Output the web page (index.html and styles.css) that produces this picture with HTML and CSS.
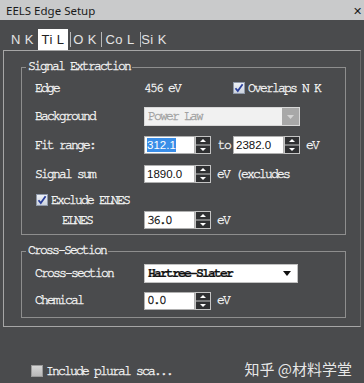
FILE: index.html
```html
<!DOCTYPE html>
<html>
<head>
<meta charset="utf-8">
<link rel="stylesheet" href="styles.css">
</head>
<body>
<div class="titlebar"><span>EELS Edge Setup</span><span class="close">✕</span></div>
<div class="tabs">
  <span class="tab t1">N K</span>
  <span class="tab t2 active">Ti L</span>
  <span class="sep"></span>
  <span class="tab t3">O K</span>
  <span class="sep"></span>
  <span class="tab t4">Co L</span>
  <span class="sep"></span>
  <span class="tab t5">Si K</span>
</div>
<div class="panel">
  <fieldset class="group g1">
    <legend>Signal Extraction</legend>
    <div class="row r-edge">
      <span class="label">Edge</span>
      <span class="edgeval">456 eV</span>
      <span class="cb checked"><svg width="10" height="10" viewBox="0 0 10 10"><path d="M1.5 5.2 L3.8 8 L8.6 1.2" fill="none" stroke="#2a3f9a" stroke-width="1.8"/></svg></span>
      <span class="cbtext">Overlaps N K</span>
    </div>
    <div class="row r-bg">
      <span class="label">Background</span>
      <span class="select disabled"><span class="seltext">Power Law</span><span class="selbtn"><svg width="7" height="4" viewBox="0 0 7 4"><path d="M0 0h7L3.5 4z" fill="#d4d4d4"/></svg></span></span>
    </div>
    <div class="row r-fit">
      <span class="label">Fit range:</span>
      <span class="num sans"><span class="hl">312.1</span></span>
      <span class="spin"><svg width="16" height="18" viewBox="0 0 16 18"><rect width="16" height="18" fill="#c4c4c4"/><rect x="1" y="1" width="14" height="7.5" fill="#2f3032"/><rect x="1" y="9.5" width="14" height="7.5" fill="#2f3032"/><path d="M5 6h6L8 3z" fill="#fff"/><path d="M5 12h6l-3 3z" fill="#fff"/></svg></span>
      <span class="to">to</span>
      <span class="num sans">2382.0</span>
      <span class="spin"><svg width="16" height="18" viewBox="0 0 16 18"><rect width="16" height="18" fill="#c4c4c4"/><rect x="1" y="1" width="14" height="7.5" fill="#2f3032"/><rect x="1" y="9.5" width="14" height="7.5" fill="#2f3032"/><path d="M5 6h6L8 3z" fill="#fff"/><path d="M5 12h6l-3 3z" fill="#fff"/></svg></span>
      <span class="unit u-fit">eV</span>
    </div>
    <div class="row r-sum">
      <span class="label">Signal sum</span>
      <span class="num sans">1890.0</span>
      <span class="spin"><svg width="16" height="18" viewBox="0 0 16 18"><rect width="16" height="18" fill="#c4c4c4"/><rect x="1" y="1" width="14" height="7.5" fill="#2f3032"/><rect x="1" y="9.5" width="14" height="7.5" fill="#2f3032"/><path d="M5 6h6L8 3z" fill="#fff"/><path d="M5 12h6l-3 3z" fill="#fff"/></svg></span>
      <span class="unit">eV (excludes</span>
    </div>
    <div class="row r-excl">
      <span class="cb checked"><svg width="10" height="10" viewBox="0 0 10 10"><path d="M1.5 5.2 L3.8 8 L8.6 1.2" fill="none" stroke="#2a3f9a" stroke-width="1.8"/></svg></span>
      <span class="cbtext">Exclude ELNES</span>
    </div>
    <div class="row r-elnes">
      <span class="label sub">ELNES</span>
      <span class="num">36.0</span>
      <span class="spin"><svg width="16" height="18" viewBox="0 0 16 18"><rect width="16" height="18" fill="#c4c4c4"/><rect x="1" y="1" width="14" height="7.5" fill="#2f3032"/><rect x="1" y="9.5" width="14" height="7.5" fill="#2f3032"/><path d="M5 6h6L8 3z" fill="#fff"/><path d="M5 12h6l-3 3z" fill="#fff"/></svg></span>
      <span class="unit">eV</span>
    </div>
  </fieldset>
  <fieldset class="group g2">
    <legend>Cross-Section</legend>
    <div class="row r-cs">
      <span class="label">Cross-section</span>
      <span class="select"><span class="seltext bold">Hartree-Slater</span><span class="arrow"><svg width="8" height="5" viewBox="0 0 8 5"><path d="M0 0h8L4 5z" fill="#111"/></svg></span></span>
    </div>
    <div class="row r-chem">
      <span class="label">Chemical</span>
      <span class="num">0.0</span>
      <span class="spin"><svg width="16" height="18" viewBox="0 0 16 18"><rect width="16" height="18" fill="#c4c4c4"/><rect x="1" y="1" width="14" height="7.5" fill="#2f3032"/><rect x="1" y="9.5" width="14" height="7.5" fill="#2f3032"/><path d="M5 6h6L8 3z" fill="#fff"/><path d="M5 12h6l-3 3z" fill="#fff"/></svg></span>
      <span class="unit">eV</span>
    </div>
  </fieldset>
</div>
<div class="row r-plural">
  <span class="cb"></span>
  <span class="cbtext">Include plural sca...</span>
</div>
<div class="watermark">知乎 @材料学堂</div>
</body>
</html>
```
FILE: styles.css
```css
* { box-sizing: border-box; }
html, body { margin: 0; }
body {
  width: 364px;
  height: 383px;
  background: #4a4b4d;
  color: #f2f2f2;
  font-family: "FreeMono", "Liberation Mono", monospace;
  font-size: 13px;
  letter-spacing: -1.8px;
  -webkit-text-stroke: 0.35px currentColor;
  overflow: hidden;
  position: relative;
}
.titlebar {
  height: 20px;
  background: #c9cacb;
  color: #1a1a1a;
  font-family: "Noto Sans", sans-serif;
  font-size: 11.5px;
  letter-spacing: 0;
  -webkit-text-stroke: 0;
  display: flex;
  align-items: center;
  justify-content: space-between;
  padding: 0 2px 0 6px;
  overflow: hidden;
}
.close { font-size: 11px; }
.tabs {
  display: flex;
  align-items: center;
  height: 21px;
  margin-top: 9px;
  padding-left: 7px;
  font-family: "Liberation Sans", sans-serif;
  font-size: 13px;
  letter-spacing: 0.4px;
  -webkit-text-stroke: 0;
}
.tab {
  height: 21px;
  display: flex;
  align-items: center;
  justify-content: center;
  color: #e4e4e4;
}
.t1 { width: 31px; }
.t2 { width: 30px; }
.t3 { width: 28px; }
.t4 { width: 36px; }
.t5 { width: 26px; }
.tab.active { background: #ffffff; color: #222; }
.sep { width: 1px; height: 15px; background: #b8b8b8; margin-left: 2px; }
.panel {
  margin-left: 3px;
  width: 358px;
  border: 1px solid #a6a6a6;
  border-right-color: #6a6a6a;
  padding: 0 0 8px 17px;
}
fieldset.group {
  margin: 9px 0 0;
  padding: 0 0 5px 0;
  width: 325px;
  min-width: 0;
  border: 1px solid #8e8e8e;
}
.g2 { margin-top: 10px; padding-bottom: 4px; }
legend {
  padding: 0 2px;
  margin-left: 4px;
  line-height: 14px;
  height: 14px;
}
.row { display: flex; align-items: center; }
.group .row { margin-left: 13px; }
.label { width: 109px; flex: none; }
.label.sub { padding-left: 27px; }
.r-edge { height: 28px; }
.r-bg { height: 29px; }
.r-fit { height: 28px; }
.r-sum { height: 30px; }
.r-excl { height: 22px; padding-left: 1px; }
.r-elnes { height: 18px; }
.r-cs { height: 31px; }
.r-chem { height: 23px; }
.edgeval { width: 89px; }
.cb {
  width: 12px;
  height: 12px;
  flex: none;
  border: 1px solid #8f99aa;
  background: linear-gradient(#eef1f6, #ccd3de);
  display: flex;
  align-items: center;
  justify-content: center;
}
.cbtext { margin-left: 3px; }
.num {
  width: 51px;
  height: 18px;
  flex: none;
  background: #fff;
  border: 1px solid #b0b0b0;
  color: #111;
  padding-left: 2px;
  display: flex;
  align-items: center;
}
.num.sans {
  font-family: "Liberation Sans", sans-serif;
  font-size: 11.5px;
  letter-spacing: 0;
  -webkit-text-stroke: 0;
}
.hl { background: #3a8ee8; color: #fff; padding: 1px 0; }
.spin { width: 16px; height: 18px; flex: none; display: block; }
.spin svg { display: block; }
.to { margin: 0 3px 0 7px; width: 12px; }
.unit { margin-left: 6px; }
.u-fit { margin-left: 6px; }
.select {
  height: 19px;
  display: flex;
  align-items: center;
  border: 1px solid #c2c2c2;
  background: #fff;
  color: #111;
}
.r-bg .select { width: 156px; }
.r-cs .select { width: 154px; }
.seltext { flex: 1; padding-left: 3px; }
.seltext.bold { font-weight: bold; -webkit-text-stroke: 0.2px currentColor; }
.select.disabled { background: #f1f1f1; border-color: #d8d8d8; color: #a2a2a2; }
.selbtn {
  width: 17px;
  height: 17px;
  background: #a8a8a8;
  display: flex;
  align-items: center;
  justify-content: center;
}
.arrow { width: 16px; display: flex; align-items: center; justify-content: center; margin-right: 2px; }
.r-plural { margin: 38px 0 0 31px; height: 12px; }
.r-plural .cb { background: linear-gradient(#d6d6d6, #b8b8b8); border-color: #9a9a9a; }
.watermark {
  position: absolute;
  right: 12px;
  bottom: 4px;
  font-family: "Noto Sans CJK SC", sans-serif;
  font-size: 15px;
  letter-spacing: 0;
  -webkit-text-stroke: 0;
  color: rgba(255, 255, 255, 0.88);
}
```
